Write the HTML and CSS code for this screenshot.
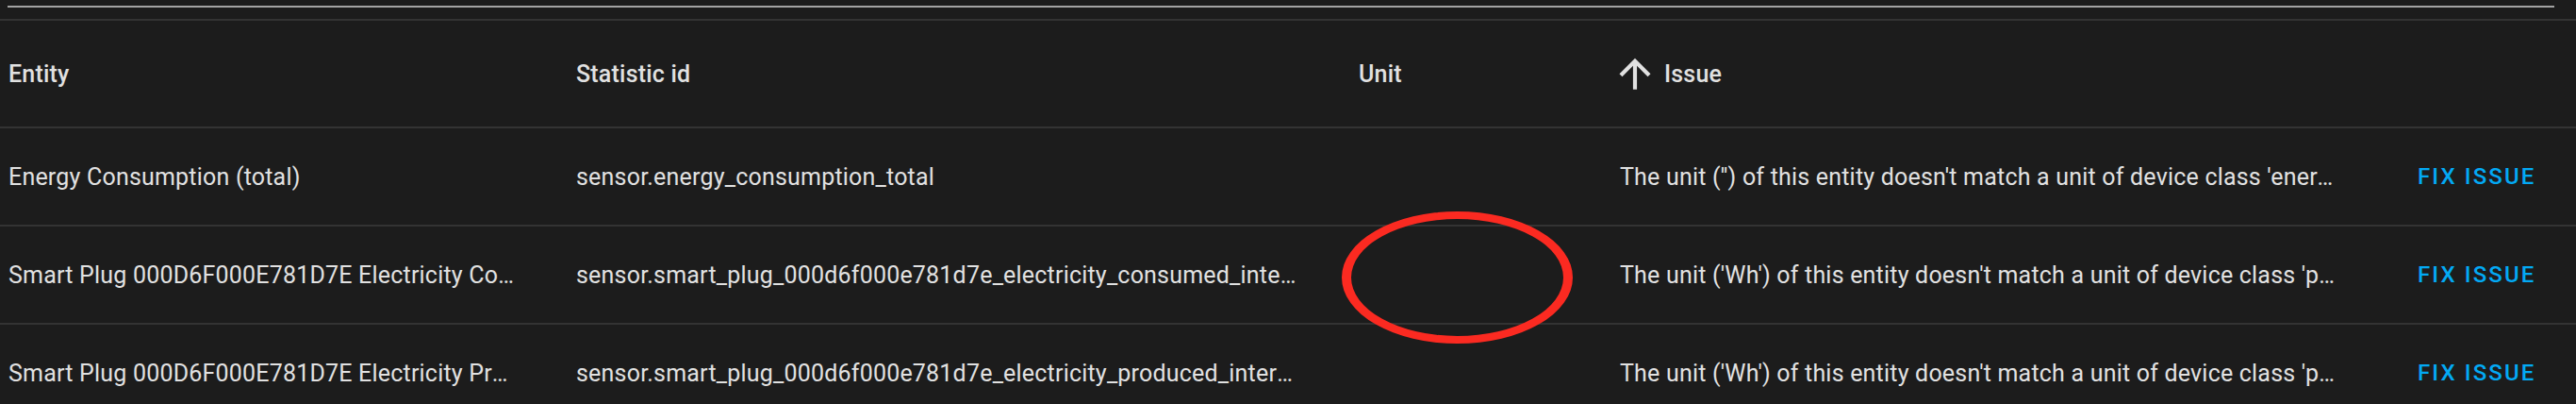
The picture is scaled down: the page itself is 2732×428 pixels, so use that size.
FILE: index.html
```html
<!DOCTYPE html>
<html>

<head>
    <meta charset="utf-8">
    <title>Statistics</title>
    <link rel="stylesheet" href="styles.css">
</head>

<body>
    <div class="search-line"></div>
    <div class="table">
        <div class="row header">
            <div class="cell entity">Entity</div>
            <div class="cell statistic">Statistic id</div>
            <div class="cell unit">Unit</div>
            <div class="cell issue">
                <svg class="sort-icon" viewBox="0 0 24 24">
                    <path d="M13,20H11V8L5.5,13.5L4.08,12.08L12,4.16L19.92,12.08L18.5,13.5L13,8V20Z" />
                </svg>
                <span>Issue</span>
            </div>
            <div class="cell action"></div>
        </div>
        <div class="row">
            <div class="cell entity">Energy Consumption (total)</div>
            <div class="cell statistic">sensor.energy_consumption_total</div>
            <div class="cell unit"></div>
            <div class="cell issue">The unit ('') of this entity doesn't match a unit of device class 'energy'.</div>
            <div class="cell action"><button class="button">Fix issue</button></div>
        </div>
        <div class="row">
            <div class="cell entity">Smart Plug 000D6F000E781D7E Electricity Consumed Interval</div>
            <div class="cell statistic">sensor.smart_plug_000d6f000e781d7e_electricity_consumed_interval</div>
            <div class="cell unit"></div>
            <div class="cell issue">The unit ('Wh') of this entity doesn't match a unit of device class 'power'.</div>
            <div class="cell action"><button class="button">Fix issue</button></div>
        </div>
        <div class="row">
            <div class="cell entity">Smart Plug 000D6F000E781D7E Electricity Produced Interval</div>
            <div class="cell statistic">sensor.smart_plug_000d6f000e781d7e_electricity_produced_interval</div>
            <div class="cell unit"></div>
            <div class="cell issue">The unit ('Wh') of this entity doesn't match a unit of device class 'power'.</div>
            <div class="cell action"><button class="button">Fix issue</button></div>
        </div>
    </div>
    <div class="marker"></div>
</body>

</html>
```

FILE: styles.css
```css
body {
    font-family: Roboto, "Noto Sans", sans-serif;
    background: #1c1c1c;
    color: #e1e1e1;
    margin: 0;
    padding: 0;
    overflow: hidden;
}

.search-line {
    height: 2px;
    margin: 6px 23px 0 8px;
    background: #a3a3a3;
}

.table {
    margin-top: 12px;
    border-top: 2px solid #333;
}

.row {
    display: grid;
    grid-template-columns: 602px 830px 277px 822px 1fr;
    align-items: center;
    height: 102px;
    padding-left: 9px;
    border-bottom: 2px solid #333;
    font-size: 25px;
    letter-spacing: 0.2px;
}

.row.header {
    height: 112px;
    font-weight: 500;
}

.cell {
    white-space: nowrap;
    overflow: hidden;
    text-overflow: ellipsis;
    padding-right: 61px;
}

.statistic {
    padding-right: 66px;
}

.issue {
    padding-right: 60px;
}

.header .issue {
    display: flex;
    align-items: center;
    overflow: visible;
}

.sort-icon {
    width: 50px;
    height: 50px;
    margin-left: -9px;
    margin-right: 6px;
    fill: #e1e1e1;
}

.action {
    padding-right: 0;
}

.button {
    margin-left: 8px;
    padding: 12px 16px;
    background: none;
    border: none;
    color: #03a9f4;
    font-family: Roboto, sans-serif;
    font-size: 24px;
    font-weight: 500;
    letter-spacing: 2.1px;
    text-transform: uppercase;
    cursor: pointer;
}

.marker {
    position: absolute;
    left: 1423px;
    top: 224px;
    width: 245px;
    height: 140px;
    box-sizing: border-box;
    border: 8px solid #fb2a21;
    border-width: 8px 10px;
    border-radius: 50%;
}
```
